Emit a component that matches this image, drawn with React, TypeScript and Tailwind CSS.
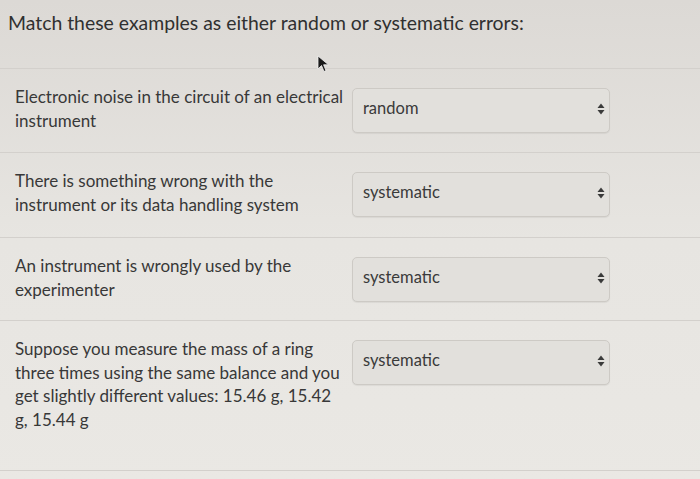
import React from 'react';

const rows = [
  { prompt: 'Electronic noise in the circuit of an electrical instrument', answer: 'random', h: 'h-[84px]' },
  { prompt: 'There is something wrong with the instrument or its data handling system', answer: 'systematic', h: 'h-[85px]' },
  { prompt: 'An instrument is wrongly used by the experimenter', answer: 'systematic', h: 'h-[83px]' },
  {
    prompt: 'Suppose you measure the mass of a ring three times using the same balance and you get slightly different values: 15.46 g, 15.42 g, 15.44 g',
    answer: 'systematic',
    h: 'h-[150px]',
  },
];

const SortArrows = () => (
  <svg width="8" height="12" viewBox="0 0 8 12" className="text-[#3a3a3a]">
    <path d="M4 0.5 L7.5 5 H0.5 Z" fill="currentColor" />
    <path d="M4 11.5 L7.5 7 H0.5 Z" fill="currentColor" />
  </svg>
);

const Pointer = () => (
  <svg width="14" height="18" viewBox="0 0 14 18">
    <path d="M1 1 L1 14 L4.5 10.5 L7 16.5 L9 15.6 L6.6 9.8 L11.5 9.8 Z" fill="#1a1a1a" stroke="#f4f4f4" strokeWidth="0.8" />
  </svg>
);

export default function App() {
  return (
    <div className="relative w-[700px] h-[479px] overflow-hidden bg-gradient-to-b from-[#dcd9d5] via-[#e7e5e1] to-[#eae8e4] font-['Lato','Liberation_Sans',sans-serif] text-[#383838]">
      <h1 className="h-[68px] pl-[8px] pt-[10px] text-[19.4px] leading-[26px] text-[#303030]">
        Match these examples as either random or systematic errors:
      </h1>

      <div className="border-t border-[#d3d0cc]">
        {rows.map((row, i) => (
          <div key={i} className={`${row.h} flex items-start border-b border-[#d3d0cc] pt-[16px] pl-[15px]`}>
            <p className="w-[330px] shrink-0 text-[17px] leading-[23.5px]">{row.prompt}</p>
            <div className="ml-[7px] mt-[3px] flex h-[45px] w-[258px] items-start justify-between rounded-[5px] border border-[#cdcac5] bg-[#e2e0dc] pl-[10px] pr-[4px] pt-[9px] shadow-[0_1px_1px_rgba(0,0,0,0.06)]">
              <span className="text-[16.5px] leading-[20px] text-[#3a3a3a]">{row.answer}</span>
              <span className="mt-[5px]">
                <SortArrows />
              </span>
            </div>
          </div>
        ))}
      </div>

      <div className="absolute left-[317px] top-[55px]">
        <Pointer />
      </div>
    </div>
  );
}
